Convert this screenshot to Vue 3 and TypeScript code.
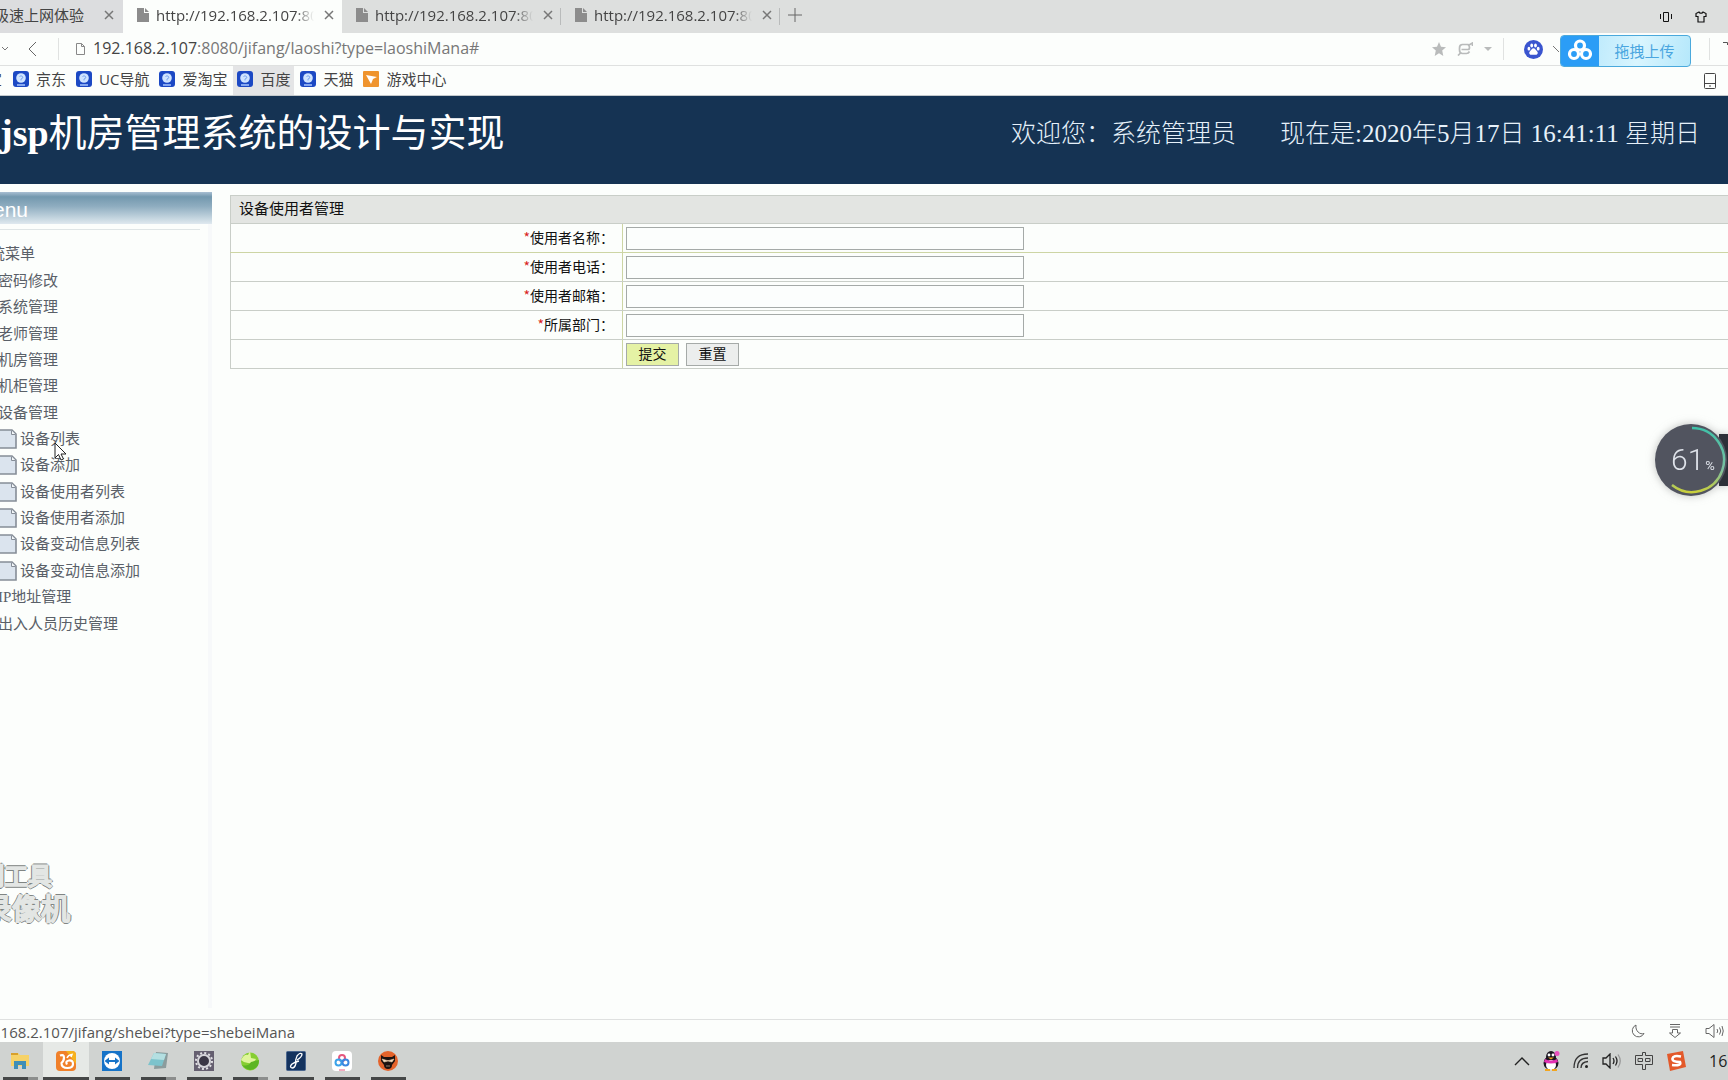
<script setup lang="ts">
interface Bookmark { label: string; kind: 'site' | 'game'; hover?: boolean }
interface Field { id: string; label: string }

const pageTabs = [
  { title: 'http://192.168.2.107:8080/jifang', active: true },
  { title: 'http://192.168.2.107:8080/jifang', active: false },
  { title: 'http://192.168.2.107:8080/jifang', active: false },
]

const bookmarks: Bookmark[] = [
  { label: '京东', kind: 'site' },
  { label: 'UC导航', kind: 'site' },
  { label: '爱淘宝', kind: 'site' },
  { label: '百度', kind: 'site', hover: true },
  { label: '天猫', kind: 'site' },
  { label: '游戏中心', kind: 'game' },
]

const menuTop = ['密码修改', '系统管理', '老师管理', '机房管理', '机柜管理', '设备管理']
const menuSub = ['设备列表', '设备添加', '设备使用者列表', '设备使用者添加', '设备变动信息列表', '设备变动信息添加']
const menuBottom = ['IP地址管理', '出入人员历史管理']

const fields: Field[] = [
  { id: 'name', label: '使用者名称' },
  { id: 'phone', label: '使用者电话' },
  { id: 'email', label: '使用者邮箱' },
  { id: 'dept', label: '所属部门' },
]
</script>

<template>
  <div class="screen">
    <div class="tabbar">
      <button class="tab tab-first"><span>极速上网体验</span>
        <svg class="close" viewBox="0 0 10 10"><path d="M1 1l8 8M9 1l-8 8" /></svg>
      </button>
      <button v-for="(t, i) in pageTabs" :key="i" class="tab" :class="{ active: t.active }">
        <svg class="tab-doc" viewBox="0 0 12 14"><path d="M0 0h7v5h5v9H0z" /><path d="M8 0l4 4H8z" /></svg>
        <span class="tab-title">{{ t.title }}</span>
        <svg class="close" viewBox="0 0 10 10"><path d="M1 1l8 8M9 1l-8 8" /></svg>
      </button>
      <button class="new-tab" aria-label="新建标签">
        <svg width="14" height="14" viewBox="0 0 14 14"><path d="M7 0v14M0 7h14" stroke="#666" fill="none" /></svg>
      </button>
      <div class="window-tools">
        <svg width="14" height="12" viewBox="0 0 14 12" fill="none" stroke="#111"><path d="M4.500 1.500h5v9h-5zM1.500 3v5M12.500 3v5" /></svg>
        <svg width="12" height="12" viewBox="0 0 12 12" fill="none" stroke="#111" stroke-width="1.200"><path d="M4 1L1 2.500v3h2V11h6V5.500h2v-3L8 1 7 2.200H5z" /></svg>
      </div>
    </div>

    <div class="address">
      <svg width="8" height="6" viewBox="0 0 8 6" fill="none" stroke="#777"><path d="M1 1l3 3 3-3" /></svg>
      <button class="back" aria-label="后退">
        <svg width="9" height="16" viewBox="0 0 9 16" fill="none" stroke="#666"><path d="M8 1L1 8l7 7" /></svg>
      </button>
      <i class="sep"></i>
      <svg class="page-icon" width="9" height="12" viewBox="0 0 9 12" fill="none" stroke="#888"><path d="M.5.5h5l3 3v8h-8zM5.500.5v3h3" /></svg>
      <p class="url">192.168.2.107<span>:8080/jifang/laoshi?type=laoshiMana#</span></p>
      <div class="address-tools">
        <svg width="14" height="14" viewBox="0 0 14 14"><path fill="#b9bbbb" d="M7 0l2 4.700 5 .5-3.800 3.400L11.300 14 7 11.200 2.700 14l1.100-5.400L0 5.200l5-.5z" /></svg>
        <svg width="16" height="14" viewBox="0 0 16 14" fill="none" stroke="#b9bbbb" stroke-width="1.700"><path d="M4.500 7.500H11q1.500 0 1.500-2T11 2.500H5.500Q2.500 2.500 2.500 6v2q0 3.500 3 3.500h4q2 0 3-2M1 13.500l3-3M12 3l3.500-2v3" /></svg>
        <svg width="8" height="4" viewBox="0 0 8 4"><path fill="#b9bbbb" d="M0 0h8L4 4z" /></svg>
        <i class="sep"></i>
      </div>
      <svg class="paw" width="19" height="19" viewBox="0 0 19 19">
        <circle cx="9.500" cy="9.500" r="9.500" fill="#3a55cf" />
        <g fill="#fff"><ellipse cx="4.900" cy="8.700" rx="1.400" ry="1.900" /><ellipse cx="7.700" cy="5.500" rx="1.400" ry="2" /><ellipse cx="11.500" cy="5.500" rx="1.400" ry="2" /><ellipse cx="14.200" cy="8.700" rx="1.400" ry="1.900" /><path d="M9.500 8.300c1.600 0 2 1.600 3.300 2.700 2 1.800.6 4-1.200 3.800-1.400-.2-2.700-.2-4.200 0-1.800.2-3.200-2-1.200-3.800 1.300-1.100 1.700-2.700 3.300-2.700z" /></g>
      </svg>
      <svg class="more" width="8" height="8" viewBox="0 0 8 8" fill="none" stroke="#777"><path d="M1 1l6 6" /></svg>
      <div class="address-end">
        <i class="sep"></i>
        <svg width="5" height="16" viewBox="0 0 5 16" fill="none" stroke="#555"><path d="M0 1.500h4.500V4" /></svg>
      </div>
    </div>

    <nav class="bookmarks">
      <span class="cut-bookmark">淘宝</span>
      <a v-for="b in bookmarks" :key="b.label" href="#" :class="{ hover: b.hover }">
        <svg v-if="b.kind === 'site'" width="16" height="16" viewBox="0 0 16 16">
          <rect width="16" height="16" rx="3" fill="#1c49c4" /><circle cx="8" cy="7" r="4.800" fill="#cfe4ff" />
          <path d="M6.500 5.500q1.500-1.500 3 0T8 8v1.500" fill="none" stroke="#7ba6ee" /><path d="M4 14h8" stroke="#a9c7ff" stroke-width="1.500" />
        </svg>
        <svg v-else width="16" height="16" viewBox="0 0 16 16"><rect width="16" height="16" rx="1" fill="#ef942d" /><path fill="#fff" d="M3 4l11 2-4 2-2 5z" /></svg>
        {{ b.label }}
      </a>
      <svg class="tablet" width="12" height="16" viewBox="0 0 12 16" fill="none" stroke="#444"><rect x=".5" y=".5" width="11" height="15" rx="1" /><path d="M.5 10.500h11M5 13h2" /></svg>
    </nav>

    <header class="banner">
      <h1><b>jsp</b>机房管理系统的设计与实现</h1>
      <p class="who"><span>欢迎您：系统管理员</span><span>现在是:2020年5月17日 16:41:11 星期日</span></p>
    </header>

    <div class="content">
      <aside class="sidebar">
        <h2><span>Menu</span></h2>
        <p class="menu-root"><span>系统菜单</span></p>
        <ul>
          <li v-for="m in menuTop" :key="m"><a href="#">{{ m }}</a></li>
        </ul>
        <ul class="sub">
          <li v-for="m in menuSub" :key="m">
            <svg width="17" height="20" viewBox="0 0 17 20">
              <path d="M-1 1h13l4 4v14H-1z" fill="#dbe4ee" stroke="#858d97" stroke-width="1.600" />
              <path d="M11.500 1.500V5.500h4" fill="#f4f8fa" stroke="#858d97" />
            </svg>
            <a href="#">{{ m }}</a>
          </li>
        </ul>
        <ul class="short">
          <li v-for="m in menuBottom" :key="m"><a href="#">{{ m }}</a></li>
        </ul>
      </aside>

      <main>
        <form @submit.prevent>
          <table>
            <thead>
              <tr><th colspan="2">设备使用者管理</th></tr>
            </thead>
            <tbody>
              <tr v-for="f in fields" :key="f.id">
                <td class="label"><label :for="f.id"><em>*</em>{{ f.label }}：</label></td>
                <td class="control"><input :id="f.id" type="text" /></td>
              </tr>
              <tr>
                <td class="label"></td>
                <td class="control"><div class="actions"><button type="submit" class="submit">提交</button><button type="reset">重置</button></div></td>
              </tr>
            </tbody>
          </table>
        </form>
      </main>
    </div>

    <footer class="status">
      <p><span>192.168.2.107/jifang/shebei?type=shebeiMana</span></p>
      <div class="status-tools">
        <svg width="14" height="14" viewBox="0 0 14 14" fill="none" stroke="#666"><path d="M5 1A6.200 6.200 0 1 0 13 9.500C9 11 4 7 5 1z" /></svg>
        <svg width="14" height="14" viewBox="0 0 14 14" fill="none" stroke="#666"><path d="M2 .5h10M2 3h10M4.500 5.500h5V9h3L7 13.500 1.500 9h3z" /></svg>
        <svg width="19" height="14" viewBox="0 0 19 14" fill="none" stroke="#666"><path d="M1 4.500h3l5-4v13l-5-4H1zM12 5q1.500 2 0 4M14.500 3.500q2.500 3.500 0 7M17 2q2.500 5 0 10" /></svg>
      </div>
    </footer>

    <div class="taskbar">
      <div class="apps">
        <button class="grouped" aria-label="资源管理器">
          <svg width="20" height="20" viewBox="0 0 20 20"><path d="M1 2h7l2 2h9v11H1z" fill="#f6d268" /><path d="M1 2h7v2H1z" fill="#d8a02b" /><path d="M4 18v-8h12v8h-4v-4H8v4z" fill="#3f8fb8" /></svg>
        </button>
        <button class="current" aria-label="UC浏览器">
          <svg width="20" height="20" viewBox="0 0 20 20"><rect width="20" height="20" rx="4" fill="#f0802a" /><path d="M10 0h6q4 0 4 4v9z" fill="#f6b21e" /><path d="M4 4.500q4-1.500 4 2T5.500 12q0 5 6 5 5.500 0 5.500-4t-4-3.500-2 4" fill="none" stroke="#fff" stroke-width="2.200" /><path d="M11 7q1-3 5-3.500L15 6" fill="none" stroke="#fff" stroke-width="1.500" /></svg>
        </button>
        <button aria-label="TeamViewer">
          <svg width="20" height="20" viewBox="0 0 20 20"><rect width="20" height="20" fill="#1673c8" /><circle cx="10" cy="10" r="8" fill="#fff" /><path d="M2.500 10L7 6.500V9h6V6.500l4.500 3.500-4.500 3.500V11H7v2.500z" fill="#1673c8" /></svg>
        </button>
        <button class="grouped" aria-label="记事本">
          <svg width="20" height="20" viewBox="0 0 20 20"><path d="M8 1l12 1-2 15-12 1z" fill="#8b9c9d" /><path d="M6 2l12 1-4 12-14-1z" fill="#7cc3cc" /><path d="M6 2l12 1-2 6-13-1z" fill="#b4dfe1" /></svg>
        </button>
        <button aria-label="设置">
          <svg width="20" height="20" viewBox="0 0 20 20"><rect width="20" height="20" fill="#655f70" /><circle cx="10" cy="10" r="8" fill="none" stroke="#e2e1e5" stroke-width="2" stroke-dasharray="2 2.190" /><circle cx="10" cy="10" r="6" fill="#3b3746" stroke="#d6d5da" stroke-width="2" /></svg>
        </button>
        <button class="grouped" aria-label="下载工具">
          <svg width="20" height="20" viewBox="0 0 20 20"><circle cx="10" cy="10.500" r="9" fill="#86ce32" /><path d="M1 9Q4 3 8 4l2-4 1 7 5 1q-3 5-8 4-4 0-7-3z" fill="#dff59b" /><path d="M2 14q6 2 9-3l8-2q0 9-9 10-5-1-8-5z" fill="#5db523" /></svg>
        </button>
        <button aria-label="数据库工具">
          <svg width="20" height="20" viewBox="0 0 20 20"><rect x=".5" y=".5" width="19" height="19" rx="1" fill="#14335f" stroke="#4a668e" /><path d="M11 9q5-3 5-6-2-2-5 2-2 4-1 7-1 5-4 5-3-1 0-4 3-2 7-3" fill="none" stroke="#fff" stroke-width="1.300" /></svg>
        </button>
        <button aria-label="网盘">
          <svg width="20" height="20" viewBox="0 0 20 20"><rect width="20" height="20" rx="4" fill="#fff" /><g fill="none" stroke-width="2"><circle cx="10" cy="7" r="3" stroke="#e5577e" /><circle cx="6.500" cy="11.500" r="3" stroke="#3ba2e9" /><circle cx="13.500" cy="11.500" r="3" stroke="#3b87e0" /></g><path d="M7 19h6" stroke="#e5577e" /></svg>
        </button>
        <button aria-label="录像机">
          <svg width="20" height="20" viewBox="0 0 20 20"><circle cx="10" cy="10" r="10" fill="#e4632b" /><path d="M3 4l3 2h8l3-2v6l-3 4q0 4-4 4t-4-4l-3-4z" fill="#1c1210" /><path d="M4 8l5 1.500h2L16 8l-2 3-4-1-4 1zM8 15h4" fill="#f5e3c9" stroke="#e8c7a3" stroke-width=".6" /></svg>
        </button>
      </div>
      <div class="tray">
        <svg width="16" height="10" viewBox="0 0 16 10" fill="none" stroke="#222" stroke-width="1.400"><path d="M1 9l7-7 7 7" /></svg>
        <svg width="17" height="20" viewBox="0 0 17 20"><ellipse cx="8" cy="12" rx="7.500" ry="7" fill="#1b1420" /><ellipse cx="8" cy="6" rx="5" ry="6" fill="#1b1420" /><ellipse cx="8" cy="14" rx="5" ry="5" fill="#fff" /><path d="M2 8q6 3 12 0l1 3q-7 3-14 0z" fill="#e431b3" /><circle cx="14" cy="2.500" r="2.500" fill="#e94fbe" /><circle cx="6" cy="4" r="1.400" fill="#fff" /><circle cx="10" cy="4" r="1.400" fill="#fff" /><path d="M5 6.500h6L8 8.500zM2 18h5v2H2zM9 18h5v2H9z" fill="#f2a51f" /></svg>
        <svg width="16" height="16" viewBox="0 0 16 16" fill="none" stroke="#333" stroke-width="1.300"><path d="M1 15Q1 1 15 1M4.500 15Q4.500 5 15 5M8 15q0-6 7-6.500" /><circle cx="13.500" cy="13.500" r="1.500" fill="#222" stroke="none" /></svg>
        <svg width="20" height="16" viewBox="0 0 20 16" fill="none" stroke="#222" stroke-width="1.300"><path d="M1 5h3l4-4v14l-4-4H1zM11 5q2 3 0 6M13.500 3.500q3 4.500 0 9" /><path d="M16 1.500q4.500 6.500 0 13" stroke="#999" /></svg>
        <svg width="18" height="18" viewBox="0 0 18 18" fill="none" stroke="#444"><path d="M7.500.5h3v3h7v9h-7v5h-3v-5h-7v-9h7zM3 6.500h4.500v3H3zM10.500 6.500H15v3h-4.500z" /></svg>
        <svg width="20" height="20" viewBox="0 0 20 20"><path d="M1 3l16-3 3 16-16 4z" fill="#e3592a" /><path d="M15 5.500Q7 4 6.500 7.500T14 11q2 4-8 3" fill="none" stroke="#fff" stroke-width="2.600" /></svg>
        <span class="clock">16</span>
      </div>
    </div>

    <div class="upload">
      <svg width="38" height="30" viewBox="0 0 38 30"><rect width="38" height="30" fill="#2b9df6" /><g fill="none" stroke="#fff" stroke-width="3.200"><circle cx="19" cy="9.500" r="4.500" /><circle cx="13" cy="18" r="4.500" /><circle cx="25" cy="18" r="4.500" /></g></svg>
      <span>拖拽上传</span>
    </div>

    <div class="gauge">
      <svg width="74" height="76" viewBox="0 0 74 76">
        <defs><linearGradient id="arc" x1="0" y1="0" x2="0" y2="1"><stop offset="0" stop-color="#3fc1a8" /><stop offset=".65" stop-color="#7cbfa0" /><stop offset="1" stop-color="#c9cf3c" /></linearGradient></defs>
        <path d="M64 12h10v52H64z" fill="#2c3038" />
        <circle cx="36" cy="38" r="36" fill="#51545f" />
        <path d="M37 6A32 32 0 1 1 17 63" fill="none" stroke="url(#arc)" stroke-width="2.500" />
      </svg>
      <p>61<small>%</small></p>
    </div>

    <div class="watermark"><p>录制工具</p><p class="big">录像机</p></div>

    <svg class="pointer" width="13" height="20" viewBox="0 0 13 20"><path d="M1 1v15l3.500-3.500L7 18l2.500-1-2.500-5h5z" fill="#fff" stroke="#222" /></svg>
  </div>
</template>

<style>
body { background: #fcfefc; overflow: hidden; }
</style>

<style scoped>
* { box-sizing: border-box; }
h1, h2, p, ul { margin: 0; padding: 0; font-weight: 400; }
button { font: inherit; border: 0; padding: 0; background: none; color: inherit; }
a { color: inherit; text-decoration: none; }
svg { flex: none; display: block; }

.screen {
  position: relative;
  display: flex;
  flex-direction: column;
  min-height: 100vh;
  overflow: hidden;
  background: #fcfefc;
  font: 15px/20px "Open Sans", "Noto Sans CJK SC", sans-serif;
  color: #444;
}

/* Browser tabs */
.tabbar { display: flex; height: 33px; background: #dddfde; }
.tab { display: flex; align-items: center; flex: none; width: 219px; padding: 0 8px 3px 14px; white-space: nowrap; position: relative; }
.tab:not(.active):not(.tab-first)::after { content: ""; position: absolute; right: 0; top: 8px; width: 1px; height: 17px; background: #b9bbbb; }
.tab-first { justify-content: flex-end; width: 123px; padding-right: 9px; gap: 20px; background: #dcdddf; }
.tab.active { background: #fcfefc; }
.tab-doc { width: 12px; height: 14px; margin-right: 7px; fill: #8c8c8c; }
.tab-title { flex: 1; min-width: 0; overflow: hidden; text-align: left; margin-right: 10px; mask-image: linear-gradient(to right, #000 88%, transparent); }
.close { width: 10px; height: 10px; fill: none; stroke: #777; stroke-width: 1.500; }
.new-tab { margin-left: 8px; padding-bottom: 3px; }
.window-tools { display: flex; align-items: center; gap: 22px; margin-left: auto; padding-right: 21px; }

/* Address bar */
.address { display: flex; align-items: center; height: 33px; padding-left: 1px; border-bottom: 1px solid #dfe1e0; }
.sep { width: 1px; height: 22px; background: #e0e2e1; }
.back { margin: 0 21px 0 19px; }
.page-icon { margin: 0 8px 0 17px; }
.url { padding-bottom: 2px; font-size: 16px; color: #444; }
.url span { color: #777; }
.address-tools { display: flex; align-items: center; gap: 11px; margin-left: auto; }
.paw { margin-left: 20px; }
.more { margin-left: 9px; }
.address-end { display: flex; align-items: center; justify-content: flex-end; gap: 13px; width: 168px; }

/* Bookmarks */
.bookmarks { display: flex; align-items: center; height: 30px; border-bottom: 1px solid #c3c9cc; }
.cut-bookmark { display: flex; justify-content: flex-end; width: 2px; margin-right: 7px; padding-bottom: 3px; overflow: hidden; white-space: nowrap; }
.bookmarks a { display: flex; align-items: center; gap: 7px; height: 29px; margin-right: 2px; padding: 0 4px 3px; }
.bookmarks a.hover { background: #e4e5e6; }
.tablet { margin: 0 12px 0 auto; }

/* Banner */
.banner { display: flex; justify-content: space-between; height: 88px; padding: 12px 28px 0 0; background: #153353; color: #fff; font-family: "Liberation Serif", "Noto Sans CJK SC", serif; white-space: nowrap; }
h1 { font-size: 38px; line-height: 50px; }
.who { display: flex; gap: 44px; font-size: 25px; line-height: 52px; color: #e6f1fa; font-weight: 300; }

/* Body */
.content { display: flex; flex: 1; }
.sidebar { flex: none; width: 212px; margin: 8px 0 11px; border-right: 4px solid #f7f9fa; color: #5a6068; font-family: "Liberation Serif", "Noto Sans CJK SC", serif; }
h2 { display: flex; width: 212px; height: 32px; background: linear-gradient(#a9bfd2, #7398ae 15%, #8fadc0 45%, #dfe9ef); font: 21px/36px "Liberation Sans", sans-serif; color: #fff; }
h2 span, .menu-root span { display: flex; justify-content: flex-end; width: 28px; white-space: nowrap; }
.menu-root { width: 200px; margin-top: 5px; padding-top: 11px; border-top: 1px solid #dfe5e6; line-height: 27px; }
.menu-root span { width: 35px; }
ul { display: flex; flex-direction: column; height: 158px; margin-left: -2px; list-style: none; }
ul.sub { margin-left: 0; }
ul.short { height: 53px; }
li { display: flex; flex: 1; align-items: center; gap: 3px; }
main { flex: 1; padding: 11px 0 0 18px; }
table { width: 100%; border-collapse: collapse; font: 14px/20px "Noto Sans CJK SC", sans-serif; color: #111; }
th { height: 28px; padding: 0 8px 3px; border: 1px solid #c9cec8; border-right: 0; background: #e3e5e2; text-align: left; font-size: 15px; font-weight: 400; }
td { height: 29px; padding: 0 3px; border-top: 1px solid #c9cec8; border-bottom: 1px solid #c9cec8; }
tbody tr:first-child td { border-bottom: 1px solid #cdd5a4; }
.label { width: 392px; padding: 0 8px 3px 0; border-left: 1px solid #c9cec8; border-right: 1px solid #cdd5a4; text-align: right; }
.label em { color: #d81e1e; font-style: normal; }
input { display: block; width: 398px; height: 23px; border: 1px solid #a5aaa8; background: #fcfefd; font: inherit; }
.actions { display: flex; gap: 7px; }
.actions button { width: 53px; height: 23px; padding-bottom: 3px; border: 1px solid #a5aaa8; background: #eceeed; line-height: 18px; }
.actions .submit { background: #e5f2a5; }

/* Status line */
.status { display: flex; justify-content: space-between; align-items: center; height: 23px; border-top: 1px solid #dfe1e0; color: #555; }
.status p { width: 295px; overflow: hidden; padding-top: 2px; }
.status p span { display: flex; justify-content: flex-end; white-space: nowrap; }
.status-tools { display: flex; gap: 23px; padding-right: 4px; }

/* Taskbar */
.taskbar { display: flex; justify-content: space-between; height: 38px; background: #d0d3d1; overflow: hidden; }
.apps { display: flex; margin-left: -3px; }
.apps button { display: flex; justify-content: center; position: relative; width: 46px; padding-top: 9px; }
.apps button::after { content: ""; position: absolute; left: 6px; right: 5px; bottom: 0; height: 3px; background: #454747; }
.apps .grouped::after { background: linear-gradient(to right, #454747 72%, #8c8e8d 72%); }
.apps .current { background: #e6e9e6; }
.apps .current::after { left: 0; right: 0; }
.tray { display: flex; align-items: center; gap: 13px; width: 214px; color: #222; font-size: 16px; }
.clock { margin-left: 10px; white-space: nowrap; }

/* Floating widgets */
.upload { position: absolute; top: 35px; right: 37px; display: flex; align-items: center; width: 131px; height: 32px; border: 1px solid #4aa9dc; border-radius: 4px; overflow: hidden; background: linear-gradient(100deg, #a9e2fb, #d9f5fe 60%, #b5e8fb); color: #4aa6e0; }
.upload span { flex: 1; text-align: center; }
.gauge { position: absolute; top: 422px; right: 0; width: 73px; height: 76px; filter: drop-shadow(0 0 4px #8888); }
.gauge p { position: absolute; top: 22px; left: 16px; display: flex; align-items: baseline; color: #dfe3ea; font: 300 30px/32px Roboto, sans-serif; }
.gauge small { margin-left: 1px; font-size: 13px; font-weight: 400; }
.watermark {
  position: absolute; left: 0; top: 860px; display: flex; flex-direction: column; width: 74px;
  color: #e3e6e4; font: 700 24px/30px "Noto Sans CJK SC", sans-serif; white-space: nowrap;
  -webkit-text-stroke: 2px #e3e6e4;
  text-shadow: 2px 0 #808583, -2px 0 #808583, 0 2px #808583, 0 -2px #808583, 1px 1px #808583, -1px -1px #808583, 1px -1px #808583, -1px 1px #808583;
}
.watermark p { display: flex; justify-content: flex-end; width: 52px; }
.watermark .big { width: 70px; font-size: 29px; line-height: 34px; }
.pointer { position: absolute; left: 54px; top: 442px; }
</style>
